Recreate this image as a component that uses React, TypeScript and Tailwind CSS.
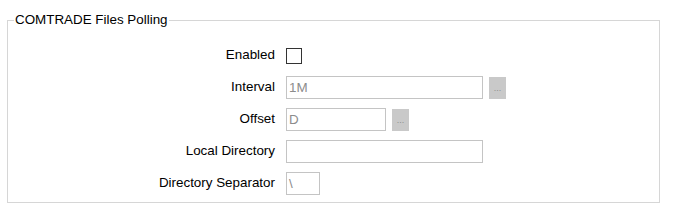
import React from 'react';

function Row({ label, children }: { label: string; children: React.ReactNode }) {
  return (
    <div className="flex items-center h-[23px]">
      <div className="w-[278px] text-right pr-[11px] text-black">{label}</div>
      <div className="flex items-center">{children}</div>
    </div>
  );
}

function TextBox({ value, width }: { value: string; width: string }) {
  return (
    <div
      className={`${width} h-[23px] border border-[#c4c4c4] bg-white px-[2px] leading-[21px] text-[#8c8c8c]`}
    >
      {value}
    </div>
  );
}

function DotsButton() {
  return (
    <button className="ml-[6px] w-[17px] h-[22px] bg-[#c9c9c9] text-[#8f8f8f] text-[9px] leading-none flex items-end justify-center pb-[6px]">
      ...
    </button>
  );
}

export default function App() {
  return (
    <div
      className="w-[675px] h-[214px] bg-white pl-[7px] pt-[12px] text-[13.4px]"
      style={{ fontFamily: '"Liberation Sans", Arial, sans-serif' }}
    >
      <fieldset className="w-[653px] border border-[#d6d6d6] pb-[7px] pt-[16px] m-0">
        <legend className="ml-[6px] px-[1px] leading-[16px] text-black">COMTRADE Files Polling</legend>
        <div className="flex flex-col gap-[9px]">
          <Row label="Enabled">
            <div className="w-[16px] h-[16px] border border-[#333] bg-white" />
          </Row>
          <Row label="Interval">
            <TextBox value="1M" width="w-[197px]" />
            <DotsButton />
          </Row>
          <Row label="Offset">
            <TextBox value="D" width="w-[100px]" />
            <DotsButton />
          </Row>
          <Row label="Local Directory">
            <TextBox value="" width="w-[197px]" />
          </Row>
          <Row label="Directory Separator">
            <TextBox value="\" width="w-[34px]" />
          </Row>
        </div>
      </fieldset>
    </div>
  );
}
